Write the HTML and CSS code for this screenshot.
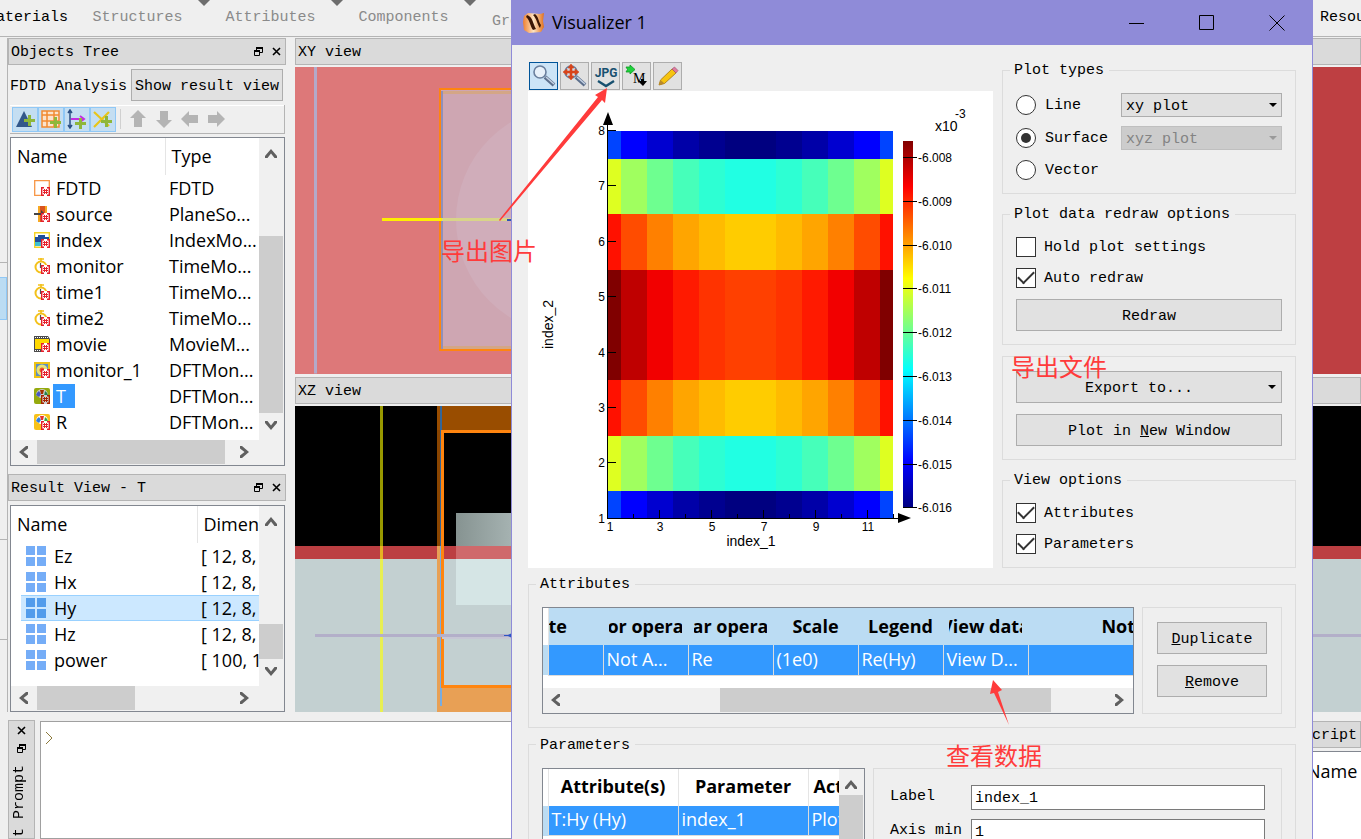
FILE: index.html
```html
<!DOCTYPE html>
<html lang="en">
<head>
    <meta charset="UTF-8">
    <meta name="viewport" content="width=device-width, initial-scale=1.0">
    <title>Visualizer 1</title>
    <link rel="stylesheet" href="styles.css">
</head>
<body>
    <!-- Shared icons -->
    <svg class="defs" aria-hidden="true">
        <symbol id="chev-up" viewBox="0 0 12 10"><path d="M0 8 6 1l6 7v2H9.500L6 5.500 2.500 10H0z" fill="#606060"/></symbol>
        <symbol id="chev-down" viewBox="0 0 12 10"><path d="M0 2 6 9l6-7V0H9.500L6 4.500 2.500 0H0z" fill="#606060"/></symbol>
        <symbol id="chev-left" viewBox="0 0 10 12"><path d="M8 0 1 6l7 6h2V9.500L5.500 6 10 2.500V0z" fill="#606060"/></symbol>
        <symbol id="chev-right" viewBox="0 0 10 12"><path d="M2 0l7 6-7 6H0V9.500L4.500 6 0 2.500V0z" fill="#606060"/></symbol>
        <symbol id="float" viewBox="0 0 9 9"><path d="M2.500 3V1.500h6v4H6M.5 3.500h5v5h-5z" fill="none" stroke="#000"/><path d="M2 0h7v2H2zM0 3h6v2H0z"/></symbol>
        <symbol id="close" viewBox="0 0 9 9"><path d="M1 1l7 7M8 1 1 8" fill="none" stroke="#000" stroke-width="1.600"/></symbol>
        <symbol id="caret" viewBox="0 0 8 4"><path d="M0 0h8L4 4z"/></symbol>
        <symbol id="plus" viewBox="0 0 11 11"><path d="M4 0h3v4h4v3H7v4H4V7H0V4h4z" fill="#8fb73a"/></symbol>
        <symbol id="arrow" viewBox="0 0 18 18"><path d="M9 0l8 8h-4v9H5V8H1z" fill="#b4b4b4"/></symbol>
        <symbol id="grid4" viewBox="0 0 20 20"><path d="M0 0h9v9H0zM11 0h9v9h-9zM0 11h9v9H0zM11 11h9v9h-9z"/></symbol>
        <symbol id="badge" viewBox="0 0 9 9"><path d="M0 0h9v9H0z" fill="#fff"/><path d="M3 .7H.7v7.600H3M6 .7h2.300v7.600H6" fill="none" stroke="#e5202b" stroke-width="1.400"/><path d="M3.500 2v5M5.500 2v5M2 3.500h5M2 5.500h5" stroke="#e5202b"/></symbol>
        <symbol id="i-fdtd" viewBox="0 0 16 16"><path d="M.7.7h14.600v14.600H.7z" fill="#fff" stroke="#f79646" stroke-width="1.300"/><use href="#badge" x="7" y="7" width="9" height="9"/></symbol>
        <symbol id="i-source" viewBox="0 0 16 16"><path d="M4 0h9v16H4z" fill="#f7a823"/><path d="M6 0h5v16H6z" fill="#d9531e"/><path d="M0 7h7V4l4 4-4 4v-3H0z" fill="#444"/><use href="#badge" x="7" y="7" width="9" height="9"/></symbol>
        <symbol id="i-index" viewBox="0 0 16 16"><path d="M.7.7h14.600v14.600H.7z" fill="#fff" stroke="#f5d327" stroke-width="1.400"/><path d="M1 5h3V3h7v2h4v5H1z" fill="#1f4e9c"/><path d="M1 10h14v4H1z" fill="#3ebfd0"/><use href="#badge" x="7" y="7" width="9" height="9"/></symbol>
        <symbol id="i-time" viewBox="0 0 16 16"><circle cx="7" cy="9" r="5.500" fill="#fff" stroke="#f3c11b" stroke-width="2"/><path d="M4 1h6M7 0v3" stroke="#f3c11b" stroke-width="1.600"/><path d="M6.500 5v5" stroke="#555" stroke-width="1.200"/><use href="#badge" x="7" y="7" width="9" height="9"/></symbol>
        <symbol id="i-movie" viewBox="0 0 16 16"><path d="M0 0h14l2 3v13H0z" fill="#4b4b4b"/><path d="M1 1.500h14M1 14.500h14" stroke="#fff" stroke-dasharray="1 1"/><path d="M1 3h14v10H1z" fill="#ffd800"/><use href="#badge" x="7" y="7" width="9" height="9"/></symbol>
        <symbol id="i-dft" viewBox="0 0 16 16"><path d="M1 1h14v14H1z" fill="#5c8fc0" stroke="#edc313" stroke-width="2"/><circle cx="8" cy="8" r="5.500" fill="#e3e27a"/><circle cx="8" cy="8" r="2.500" fill="#ee5a24"/><use href="#badge" x="7" y="7" width="9" height="9"/></symbol>
        <symbol id="i-power" viewBox="0 0 16 16"><rect width="16" height="16" rx="2" fill="#f7c21a"/><path d="M2 7a6 6 0 0 1 12 0l-4 3H6z" fill="#fff"/><path d="M2 7a6 6 0 0 1 3-4l2 3-2 3z" fill="#2f7de1"/><path d="M6 2h4l-1 4H7z" fill="#e5302b"/><path d="M11 3a6 6 0 0 1 3 4l-4 1z" fill="#3ba344"/><use href="#badge" x="7" y="7" width="9" height="9"/></symbol>
    </svg>

    <div class="app">
        <nav class="ribbon">
            <span class="tab tab-first">Materials</span>
            <span class="tab muted">Structures</span>
            <span class="tab muted">Attributes</span>
            <span class="tab muted">Components</span>
            <span class="tab tab-low muted">Groups</span>
            <span class="tab tab-last">Resources</span>
        </nav>

        <div class="workspace">
            <div class="strip">
                <span class="strip-btn"></span>
                <span class="strip-line"></span>
                <span class="strip-line"></span>
            </div>

            <aside class="docks">
                <div class="dock-title">
                    <span>Objects Tree</span>
                    <svg width="9" height="9"><use href="#float"/></svg>
                    <svg width="9" height="9"><use href="#close"/></svg>
                </div>
                <div class="mode-row">
                    <span>FDTD Analysis</span>
                    <button class="btn" type="button">Show result view</button>
                </div>
                <div class="tree-tools">
                    <button class="tool on" type="button" aria-label="Add structure"><svg width="20" height="20" viewBox="0 0 20 20"><path d="M9 2l8 16H1z" fill="#33588a"/><use href="#plus" x="9" y="6" width="11" height="11"/></svg></button>
                    <button class="tool on" type="button" aria-label="Add mesh"><svg width="20" height="20" viewBox="0 0 20 20"><path d="M1 2h17v16H1zM1 6h17M1 12h17M6 2v16M13 2v16" fill="#fbe3cc" stroke="#f28a30" stroke-width="1.500"/><use href="#plus" x="9" y="8" width="11" height="11"/></svg></button>
                    <button class="tool on" type="button" aria-label="Add source"><svg width="20" height="20" viewBox="0 0 20 20"><path d="M3 2v16M1 4l2-3 2 3M1 16l2 3 2-3" fill="none" stroke="#2b4f83" stroke-width="1.500"/><path d="M4 10h12M13 7l4 3-4 3" fill="none" stroke="#c22fe0" stroke-width="2"/><use href="#plus" x="8" y="9" width="11" height="11"/></svg></button>
                    <button class="tool on" type="button" aria-label="Add monitor"><svg width="20" height="20" viewBox="0 0 20 20"><path d="M1 3l15 14M16 3 1 18" stroke="#e8c518" stroke-width="2.200"/><use href="#plus" x="8" y="7" width="11" height="11"/></svg></button>
                    <span class="tool-sep"></span>
                    <button class="tool" type="button" aria-label="Up"><svg width="18" height="18"><use href="#arrow"/></svg></button>
                    <button class="tool" type="button" aria-label="Down"><svg class="r180" width="18" height="18"><use href="#arrow"/></svg></button>
                    <button class="tool" type="button" aria-label="Left"><svg class="r270" width="18" height="18"><use href="#arrow"/></svg></button>
                    <button class="tool" type="button" aria-label="Right"><svg class="r90" width="18" height="18"><use href="#arrow"/></svg></button>
                </div>

                <div class="list tree">
                    <div class="list-view">
                        <table>
                            <colgroup><col class="col-name"><col></colgroup>
                            <thead><tr><th>Name</th><th>Type</th></tr></thead>
                            <tbody>
                                <tr><td><svg><use href="#i-fdtd"/></svg><span>FDTD</span></td><td>FDTD</td></tr>
                                <tr><td><svg><use href="#i-source"/></svg><span>source</span></td><td>PlaneSo...</td></tr>
                                <tr><td><svg><use href="#i-index"/></svg><span>index</span></td><td>IndexMo...</td></tr>
                                <tr><td><svg><use href="#i-time"/></svg><span>monitor</span></td><td>TimeMo...</td></tr>
                                <tr><td><svg><use href="#i-time"/></svg><span>time1</span></td><td>TimeMo...</td></tr>
                                <tr><td><svg><use href="#i-time"/></svg><span>time2</span></td><td>TimeMo...</td></tr>
                                <tr><td><svg><use href="#i-movie"/></svg><span>movie</span></td><td>MovieM...</td></tr>
                                <tr><td><svg><use href="#i-dft"/></svg><span>monitor_1</span></td><td>DFTMon...</td></tr>
                                <tr class="picked"><td><svg><use href="#i-power"/></svg><span>T</span></td><td>DFTMon...</td></tr>
                                <tr><td><svg><use href="#i-power"/></svg><span>R</span></td><td>DFTMon...</td></tr>
                            </tbody>
                        </table>
                    </div>
                    <div class="vscroll">
                        <svg width="12" height="10"><use href="#chev-up"/></svg>
                        <span class="thumb"></span>
                        <svg width="12" height="10"><use href="#chev-down"/></svg>
                    </div>
                    <div class="hscroll">
                        <svg width="10" height="12"><use href="#chev-left"/></svg>
                        <span class="thumb"></span>
                        <svg width="10" height="12"><use href="#chev-right"/></svg>
                    </div>
                </div>

                <div class="dock-title dock-title-next">
                    <span>Result View - T</span>
                    <svg width="9" height="9"><use href="#float"/></svg>
                    <svg width="9" height="9"><use href="#close"/></svg>
                </div>
                <div class="list results">
                    <div class="list-view">
                        <table>
                            <colgroup><col class="col-name"><col></colgroup>
                            <thead><tr><th>Name</th><th>Dimensions</th></tr></thead>
                            <tbody>
                                <tr><td><svg><use href="#grid4"/></svg><span>Ez</span></td><td>[ 12, 8, 1, 1 ]</td></tr>
                                <tr><td><svg><use href="#grid4"/></svg><span>Hx</span></td><td>[ 12, 8, 1, 1 ]</td></tr>
                                <tr class="picked"><td><svg><use href="#grid4"/></svg><span>Hy</span></td><td>[ 12, 8, 1, 1 ]</td></tr>
                                <tr><td><svg><use href="#grid4"/></svg><span>Hz</span></td><td>[ 12, 8, 1, 1 ]</td></tr>
                                <tr><td><svg><use href="#grid4"/></svg><span>power</span></td><td>[ 100, 1 ]</td></tr>
                            </tbody>
                        </table>
                    </div>
                    <div class="vscroll">
                        <svg width="12" height="10"><use href="#chev-up"/></svg>
                        <span class="thumb"></span>
                        <svg width="12" height="10"><use href="#chev-down"/></svg>
                    </div>
                    <div class="hscroll">
                        <svg width="10" height="12"><use href="#chev-left"/></svg>
                        <span class="thumb"></span>
                        <svg width="10" height="12"><use href="#chev-right"/></svg>
                    </div>
                </div>
            </aside>

            <main class="views">
                <section class="view">
                    <div class="dock-title"><span>XY view</span></div>
                    <svg class="scene scene-xy">
                        <rect x="19" width="3" height="100%" fill="#b3a9c9"/>
                        <rect x="145" y="23" width="500" height="260" fill="#cea6b2"/>
                        <rect x="147" y="24" width="500" height="3" fill="#d4a686"/>
                        <rect x="147" y="279" width="500" height="3" fill="#d4a686"/>
                        <circle cx="276" cy="153" r="115" fill="#d0adba"/>
                        <rect x="145" y="22" width="500" height="261" fill="none" stroke="#ff850f" stroke-width="2"/>
                        <rect x="146" y="24" width="2" height="258" fill="#9090b8"/>
                        <rect x="87" y="151" width="60" height="3" fill="#ffef00"/>
                        <rect x="147" y="151" width="400" height="3" fill="#d8d488"/>
                        <rect x="212" y="152" width="10" height="2" fill="#2d55b5"/>
                    </svg>
                </section>
                <section class="view">
                    <div class="dock-title"></div>
                    <svg class="scene scene-red"></svg>
                </section>
                <section class="view">
                    <div class="dock-title"><span>XZ view</span></div>
                    <svg class="scene scene-xz">
                        <defs>
                            <linearGradient id="slab"><stop offset="0" stop-color="#869391"/><stop offset="1" stop-color="#a8b5b4"/></linearGradient>
                        </defs>
                        <rect y="140" width="100%" height="13" fill="#bc3f42"/>
                        <rect y="153" width="100%" height="100%" fill="#c3d0d1"/>
                        <rect x="161" y="107" width="60" height="33" fill="url(#slab)"/>
                        <rect x="161" y="140" width="60" height="13" fill="#cf696b"/>
                        <rect x="161" y="153" width="60" height="46" fill="#d5e5e5"/>
                        <rect x="85" width="3" height="140" fill="#999900"/>
                        <rect x="85" y="140" width="3" height="13" fill="#e6b222"/>
                        <rect x="85" y="153" width="3" height="100%" fill="#e8ef52"/>
                        <rect x="142" width="400" height="24" fill="#994d00"/>
                        <rect x="142" y="24" width="3" height="116" fill="#8a4500"/>
                        <rect x="142" y="140" width="3" height="200" fill="#e8a055"/>
                        <rect x="142" y="282" width="400" height="40" fill="#e8a055"/>
                        <rect x="145" width="2" height="140" fill="#336699"/>
                        <rect x="145" y="140" width="2" height="160" fill="#78ace0"/>
                        <path d="M600 25.500H147.500V280.500H600" fill="none" stroke="#ff850f" stroke-width="3"/>
                        <rect x="20" y="228" width="400" height="3" fill="#b3afc9"/>
                        <rect x="147" y="231" width="400" height="2" fill="#c6c6d4"/>
                        <path d="M209 229h4l4-2v5l-4-2h-4z" fill="#2d55c5"/>
                    </svg>
                </section>
                <section class="view">
                    <div class="dock-title"></div>
                    <svg class="scene scene-xz">
                        <rect y="140" width="100%" height="13" fill="#bc3f42"/>
                        <rect y="153" width="100%" height="100%" fill="#c3d0d1"/>
                        <rect y="228" width="100%" height="3" fill="#b3afc9"/>
                    </svg>
                </section>
            </main>
        </div>

        <div class="bottom">
            <div class="side-title">
                <svg width="9" height="9"><use href="#close"/></svg>
                <svg width="9" height="9"><use href="#float"/></svg>
                <span>Script Prompt</span>
            </div>
            <div class="console">
                <svg width="8" height="14" viewBox="0 0 8 14"><path d="M1 1l6 6-6 6" fill="none" stroke="#8c7a3c"/></svg>
            </div>
            <div class="script-dock">
                <div class="dock-title"><span>Script</span></div>
                <div class="script-list">Name</div>
            </div>
        </div>
    </div>

    <div class="dialog" role="dialog" aria-label="Visualizer 1">
        <header class="titlebar">
            <svg width="24" height="24" viewBox="0 0 24 24">
                <defs><linearGradient id="logo"><stop offset="0" stop-color="#ef7f2e"/><stop offset=".5" stop-color="#ffe4c0"/><stop offset="1" stop-color="#e0701c"/></linearGradient></defs>
                <path d="M2 5l4-3 12 1 4-1-1 8 1 6-3 5-12 1-5-3-1-8z" fill="url(#logo)"/>
                <path d="M4 6c4 3 4 9 7 13l3-1C11 13 11 6 5 4zM11 4c4 4 4 9 7 13l1-3c-3-4-2-8-6-11z" fill="#3b1705"/>
            </svg>
            <h1>Visualizer 1</h1>
            <button type="button" aria-label="Minimize"><svg width="16" height="16" viewBox="0 0 16 16"><path d="M0 8.500h15" stroke="#000"/></svg></button>
            <button type="button" aria-label="Maximize"><svg width="16" height="16" viewBox="0 0 16 16"><path d="M.5.5h14v14H.5z" fill="none" stroke="#000"/></svg></button>
            <button type="button" aria-label="Close"><svg width="16" height="16" viewBox="0 0 16 16"><path d="M.5.5l15 15M15.500.5l-15 15" stroke="#000"/></svg></button>
        </header>

        <div class="dialog-body">
            <div class="top-row">
                <div class="plot-side">
                    <div class="plot-tools">
                        <button class="plot-btn active" type="button" aria-label="Zoom"><svg width="24" height="24" viewBox="0 0 24 24"><path d="M13 13l9 8" stroke="#5c6f8c" stroke-width="4"/><path d="M14 13l8 7" stroke="#c5d2e4" stroke-width="1.500"/><circle cx="8" cy="8" r="6" fill="#e8f1fa" stroke="#6a7f9d" stroke-width="1.600"/></svg></button>
                        <button class="plot-btn" type="button" aria-label="Pan"><svg width="24" height="24" viewBox="0 0 24 24"><path d="M13 13l9 8" stroke="#5c6f8c" stroke-width="4"/><path d="M14 13l8 7" stroke="#c5d2e4" stroke-width="1.500"/><circle cx="8" cy="8" r="6" fill="#d5dde8" stroke="#6a7f9d" stroke-width="1.600"/><path d="M8 0l3 4H9v3h3V5l4 3-4 3V9H9v3h2l-3 4-3-4h2V9H4v2L0 8l4-3v2h3V4H5z" fill="#d9441a" stroke="#d9441a" stroke-width=".6"/></svg></button>
                        <button class="plot-btn" type="button" aria-label="Export JPG"><svg width="24" height="24" viewBox="0 0 24 24"><text x="12" y="13" class="jpg">JPG</text><path d="M4 17l8 5 8-5" fill="none" stroke="#17506f" stroke-width="2.400"/></svg></button>
                        <button class="plot-btn" type="button" aria-label="Export to Matlab"><svg width="24" height="24" viewBox="0 0 24 24"><path d="M1 3h4V1l5 4.500L5 10V8H1l1.500-2.500z" fill="#1fd23c" stroke="#0c9a22" stroke-width=".8"/><text x="8" y="19" class="mat">M</text><path d="M16 15h3v2h3l-4 5-5-5h3z"/></svg></button>
                        <button class="plot-btn" type="button" aria-label="Edit"><svg width="24" height="24" viewBox="0 0 24 24"><path d="M3 21l1.500-5L16 5l4 4L8.500 19.500z" fill="#f6c410" stroke="#a5740e" stroke-width=".8"/><path d="M16 5l2.500-2L22 6.500 20 9z" fill="#dd7ba0" stroke="#9c4a6a" stroke-width=".6"/><path d="M3 21l1.500-5 4 3.500z" fill="#b98a2c"/></svg></button>
                    </div>
                    <div class="plot">
                        <svg class="chart" viewBox="0 0 465 477" role="img" aria-label="index_2 against index_1">
                            <defs>
                                <linearGradient id="jet" x1="0" y1="0" x2="0" y2="1">
                                    <stop offset="0" stop-color="#800000"/>
                                    <stop offset=".125" stop-color="#ff0000"/>
                                    <stop offset=".375" stop-color="#ffff00"/>
                                    <stop offset=".625" stop-color="#00ffff"/>
                                    <stop offset=".875" stop-color="#0000ff"/>
                                    <stop offset="1" stop-color="#000080"/>
                                </linearGradient>
                            </defs>
                            <g id="cells" shape-rendering="crispEdges"></g>
                            <rect x="375" y="50" width="10" height="367" fill="url(#jet)"/>
                            <g id="axes" shape-rendering="crispEdges"></g>
                            <path d="M80 21l5 13H75zM383 427l-13 5v-10z"/>
                            <g id="labels"></g>
                            <text class="axis" x="223" y="455" text-anchor="middle">index_1</text>
                            <text class="axis" transform="translate(25 258) rotate(-90)">index_2</text>
                            <text class="axis" x="407" y="40">x10</text>
                            <text x="427" y="27">-3</text>
                        </svg>
                    </div>
                </div>

                <div class="options">
                    <fieldset class="group">
                        <legend>Plot types</legend>
                        <div class="types">
                            <label><input type="radio" name="type">Line</label>
                            <div class="select"><select aria-label="Line plot"><option>xy plot</option></select><svg width="8" height="4"><use href="#caret"/></svg></div>
                            <label><input type="radio" name="type" checked>Surface</label>
                            <div class="select off"><select aria-label="Surface plot" disabled><option>xyz plot</option></select><svg width="8" height="4"><use href="#caret"/></svg></div>
                            <label><input type="radio" name="type">Vector</label>
                        </div>
                    </fieldset>
                    <fieldset class="group">
                        <legend>Plot data redraw options</legend>
                        <label><input type="checkbox">Hold plot settings</label>
                        <label><input type="checkbox" checked>Auto redraw</label>
                        <button class="btn" type="button">Redraw</button>
                    </fieldset>
                    <div class="group">
                        <button class="btn menu-btn" type="button"><span>Export to...</span><svg width="8" height="4"><use href="#caret"/></svg></button>
                        <button class="btn" type="button">Plot in <u>N</u>ew Window</button>
                    </div>
                    <fieldset class="group">
                        <legend>View options</legend>
                        <label><input type="checkbox" checked>Attributes</label>
                        <label><input type="checkbox" checked>Parameters</label>
                    </fieldset>
                </div>
            </div>

            <fieldset class="group wide">
                <legend>Attributes</legend>
                <div class="grid-box attrs">
                    <div class="grid-view">
                        <table>
                            <colgroup><col class="c-head"><col class="c-first"><col class="c-85"><col class="c-85"><col class="c-85"><col class="c-85"><col class="c-85"><col class="c-notes"></colgroup>
                            <thead>
                                <tr><th></th><th class="cut">te</th><th><span>or opera</span></th><th><span>ar opera</span></th><th><span>Scale</span></th><th><span>Legend</span></th><th><span>View data</span></th><th><span>Notes</span></th></tr>
                            </thead>
                            <tbody>
                                <tr><th></th><td></td><td>Not A...</td><td>Re</td><td>(1e0)</td><td>Re(Hy)</td><td>View D...</td><td></td></tr>
                            </tbody>
                        </table>
                    </div>
                    <div class="hscroll">
                        <svg width="10" height="12"><use href="#chev-left"/></svg>
                        <span class="thumb"></span>
                        <svg width="10" height="12"><use href="#chev-right"/></svg>
                    </div>
                </div>
                <div class="frame actions">
                    <button class="btn" type="button"><u>D</u>uplicate</button>
                    <button class="btn" type="button"><u>R</u>emove</button>
                </div>
            </fieldset>

            <fieldset class="group wide">
                <legend>Parameters</legend>
                <div class="grid-box params">
                    <div class="grid-view">
                        <table>
                            <colgroup><col class="c-head"><col class="c-130"><col class="c-130"><col class="c-85"></colgroup>
                            <thead>
                                <tr><th></th><th>Attribute(s)</th><th>Parameter</th><th class="cut">Action</th></tr>
                            </thead>
                            <tbody>
                                <tr><th></th><td>T:Hy (Hy)</td><td>index_1</td><td>Plot</td></tr>
                            </tbody>
                        </table>
                    </div>
                    <div class="vscroll">
                        <svg width="12" height="10"><use href="#chev-up"/></svg>
                        <span class="thumb"></span>
                    </div>
                </div>
                <div class="frame fields">
                    <label for="axis-label">Label</label>
                    <input id="axis-label" type="text" value="index_1">
                    <label for="axis-min">Axis min</label>
                    <input id="axis-min" type="text" value="1">
                </div>
            </fieldset>
        </div>
    </div>

    <!-- Notes drawn over the windows -->
    <svg class="arrows" aria-hidden="true">
        <path d="M499 220L598 97L595 95L607 88L605 103L602 100L500 221z" fill="#ff3b3b"/>
        <path d="M1009 725L994 693L990 694L993 680L1002 690L998 692z" fill="#ff3b3b"/>
    </svg>
    <span class="note note-image">导出图片</span>
    <span class="note note-file">导出文件</span>
    <span class="note note-data">查看数据</span>

    <script src="script.js"></script>
</body>
</html>
```

FILE: styles.css
```css
:root {
    --face: #efefef;
    --title: #dadada;
    --line: #b4b4b4;
    --group-line: #dcdcdc;
    --box-line: #828790;
    --blue: #3399ff;
    --pale-blue: #bbdcf3;
    --purple: #8f8bd8;
    --mono: "Liberation Mono", "Noto Sans CJK SC", monospace;
    --ui: "Open Sans", "Noto Sans CJK SC", sans-serif;
}

* {
    box-sizing: border-box;
}

body {
    margin: 0;
    position: relative;
    height: 100vh;
    overflow: hidden;
    background: var(--face);
    color: #000;
    font: 15px/18px var(--mono);
    white-space: nowrap;
}

svg {
    display: block;
    flex: none;
}

button, input, select {
    font: inherit;
    color: inherit;
    margin: 0;
}

table {
    border-collapse: collapse;
    table-layout: fixed;
}

.defs {
    position: absolute;
    width: 0;
    height: 0;
}

.app {
    display: flex;
    flex-direction: column;
    height: 100%;
}

/* Ribbon */
.ribbon {
    display: flex;
    height: 37px;
    border-bottom: 1px solid var(--line);
    overflow: hidden;
}

.tab {
    position: relative;
    flex: none;
    width: 133px;
    padding-top: 9px;
    text-align: center;
}

.tab.muted {
    color: #8a8a8a;
}

.tab.muted:not(.tab-low)::after {
    content: "";
    position: absolute;
    right: -6px;
    top: 0;
    border: 6px solid transparent;
    border-top-color: #6d6d6d;
    border-bottom: 0;
}

.tab-first {
    width: 71px;
    display: flex;
    justify-content: flex-end;
    padding-right: 3px;
}

.tab-low {
    padding-top: 13px;
    padding-left: 22px;
    text-align: left;
}

.tab-last {
    width: 41px;
    margin-left: auto;
    text-align: left;
}

/* Docks */
.workspace {
    display: flex;
    padding-top: 1px;
}

.strip {
    width: 8px;
    border-right: 1px solid var(--line);
    padding-top: 224px;
}

.strip-btn {
    display: block;
    height: 277px;
    border-top: 1px solid var(--line);
}

.strip-btn::after {
    content: "";
    display: block;
    width: 6px;
    height: 41px;
    margin-top: 14px;
    background: var(--pale-blue);
    border: 1px solid #90c8f6;
    border-left: 0;
}

.strip-line {
    display: block;
    height: 100px;
    border-top: 1px solid var(--line);
}

.strip-line:last-child {
    height: 1px;
}

.docks {
    flex: none;
    width: 278px;
    margin-right: 9px;
}

.dock-title {
    display: flex;
    align-items: center;
    gap: 9px;
    height: 27px;
    padding: 0 4px 0 2px;
    background: var(--title);
    border: 1px solid var(--line);
}

.dock-title span {
    flex: 1;
    padding-top: 3px;
}

.dock-title-next {
    margin-top: 8px;
}

.mode-row {
    display: flex;
    align-items: center;
    gap: 4px;
    padding: 4px 2px;
}

.mode-row span {
    padding-top: 3px;
}

.btn {
    display: block;
    height: 32px;
    padding: 3px 3px 0;
    background: #e1e1e1;
    border: 1px solid #adadad;
}

.tree-tools {
    display: flex;
    align-items: center;
    height: 29px;
    margin: 0 1px 3px 2px;
    padding-left: 2px;
    border: 1px solid var(--line);
    border-width: 0 1px 1px 0;
    box-shadow: inset 0 1px #fff;
}

.tool {
    display: grid;
    place-items: center;
    width: 26px;
    height: 25px;
    padding: 0;
    background: none;
    border: 0;
}

.tool.on {
    background: #c4def2;
    border: 1px solid #90c8f6;
}

.tool-sep {
    height: 20px;
    margin: 0 4px;
    border-left: 1px solid #d0d0d0;
}

.r90 { transform: rotate(90deg); }
.r180 { transform: rotate(180deg); }
.r270 { transform: rotate(270deg); }

.list {
    display: grid;
    grid-template-columns: 1fr 25px;
    margin: 0 1px 0 2px;
    background: #fff;
    border: 1px solid var(--box-line);
    font-family: var(--ui);
    font-size: 18px;
}

.list-view {
    overflow: hidden;
    padding-bottom: 5px;
}

.list table {
    width: 100%;
}

.list th {
    height: 37px;
    padding: 0 6px 2px;
    text-align: left;
    font-weight: 400;
    line-height: 24px;
    overflow: hidden;
}

.list th + th {
    border-left: 1px solid #e5e5e5;
}

.list td {
    height: 26px;
    padding: 0 0 0 4px;
    overflow: hidden;
}

.list td:first-child {
    display: flex;
    align-items: center;
    padding-left: 23px;
}

.list td span {
    padding: 3px 9px 3px 3px;
    margin-left: 3px;
}

.tree td svg {
    width: 16px;
    height: 16px;
}

.tree .col-name {
    width: 154px;
}

.tree .picked span {
    background: var(--blue);
    color: #fff;
}

.tree .picked td svg {
    filter: hue-rotate(20deg) brightness(.8);
}

.results {
    margin-top: 4px;
}

.results .list-view {
    padding-bottom: 13px;
}

.results .col-name {
    width: 186px;
}

.results td:first-child {
    padding-left: 15px;
}

.results td:first-child svg {
    width: 20px;
    height: 20px;
    fill: #75adf7;
}

.results td:first-child span {
    margin-left: 5px;
}

.results .picked {
    background: linear-gradient(to right, #fff 10px, #cce8ff 10px);
}

.results .picked td {
    box-shadow: inset 0 1px #99d1ff, inset 0 -1px #99d1ff;
}

.results .picked td:first-child {
    margin-left: 10px;
    padding-left: 5px;
}

.results .picked td:first-child svg {
    fill: #529ceb;
}

/* Scroll bars */
.vscroll, .hscroll {
    display: flex;
    align-items: center;
    background: #f0f0f0;
}

.thumb {
    background: #cdcdcd;
}

.vscroll {
    flex-direction: column;
    justify-content: space-between;
    padding: 10px 1px 9px 0;
}

.vscroll .thumb {
    width: 24px;
    margin-top: auto;
    margin-bottom: 8px;
    height: 177px;
}

.results .vscroll .thumb {
    height: 35px;
}

.hscroll {
    grid-column: 1 / -1;
    height: 25px;
    padding: 0 34px 1px 7px;
}

.hscroll .thumb {
    width: 188px;
    height: 24px;
    margin: 0 auto 0 9px;
}

.results .hscroll .thumb {
    width: 98px;
}

/* Model views */
.views {
    flex: 1;
    display: grid;
    grid-template-columns: 1fr 1fr;
    grid-template-rows: 1fr 1fr;
    gap: 3px 8px;
    min-width: 0;
}

.view {
    display: flex;
    flex-direction: column;
    gap: 2px;
    min-width: 0;
    overflow: hidden;
}

.scene {
    flex: 1;
    width: 100%;
    min-height: 0;
}

.scene-xy { background: #dd7879; }
.scene-red { background: #be3f42; }
.scene-xz { background: #000; }

/* Bottom docks */
.bottom {
    flex: 1;
    display: flex;
    gap: 5px;
    margin-top: 8px;
    padding-left: 8px;
    min-height: 0;
}

.side-title {
    display: flex;
    flex-direction: column;
    align-items: center;
    gap: 9px;
    width: 27px;
    padding-top: 5px;
    background: var(--title);
    border: 1px solid var(--line);
    overflow: hidden;
}

.side-title span {
    writing-mode: vertical-rl;
    transform: rotate(180deg);
    padding: 0 0 3px 3px;
}

.console {
    flex: 1;
    margin-top: 1px;
    padding: 9px 4px;
    background: #fff;
    border: 1px solid #a0a0a0;
    border-right: 0;
}

.script-dock {
    width: 61px;
    display: flex;
    flex-direction: column;
    gap: 3px;
    padding-top: 1px;
}

.script-list {
    flex: 1;
    padding: 10px 7px;
    background: #fff;
    border-top: 1px solid var(--box-line);
    font-family: var(--ui);
    font-size: 18px;
}

/* Visualizer window */
.dialog {
    position: absolute;
    top: 0;
    left: 511px;
    right: 48px;
    height: 100%;
    overflow: hidden;
    background: var(--face);
    border: 1px solid var(--purple);
    border-width: 0 1px;
}

.titlebar {
    display: flex;
    align-items: center;
    height: 45px;
    padding-left: 10px;
    background: var(--purple);
}

.titlebar h1 {
    flex: 1;
    margin: 0;
    padding: 0 0 2px 6px;
    font: 400 18px/24px var(--ui);
}

.titlebar button {
    display: grid;
    place-items: center;
    width: 70px;
    height: 45px;
    padding: 0;
    background: none;
    border: 0;
}

.dialog-body {
    padding: 16px 16px 0;
}

.top-row {
    display: flex;
    gap: 9px;
    margin-bottom: 7px;
}

.plot-side {
    flex: 1;
    display: flex;
    flex-direction: column;
    padding-top: 1px;
}

.plot-tools {
    display: flex;
    gap: 2px;
    padding: 0 1px 1px;
}

.plot-btn {
    display: grid;
    place-items: center;
    width: 29px;
    height: 28px;
    padding: 0;
    background: #e1e1e1;
    border: 1px solid #adadad;
}

.plot-btn.active {
    background: #cce4f7;
    border-color: #005499;
}

.jpg {
    font: 700 12px Roboto, sans-serif;
    fill: #17506f;
    text-anchor: middle;
}

.mat {
    font: 14px "Liberation Serif", serif;
}

.plot {
    flex: 1;
    background: #fff;
}

.chart {
    width: 100%;
    font: 12px "Liberation Sans", sans-serif;
}

.axis {
    font-size: 14px;
}

.options {
    width: 294px;
    display: flex;
    flex-direction: column;
    justify-content: space-between;
}

.group {
    display: flex;
    flex-direction: column;
    gap: 11px;
    min-width: 0;
    margin: 0;
    padding: 14px 13px 13px;
    border: 1px solid var(--group-line);
}

.group legend {
    margin-left: -6px;
    padding: 2px 5px 0 4px;
    line-height: 16px;
}

.group label {
    display: flex;
    align-items: flex-end;
    align-self: center;
    gap: 8px;
    width: 100%;
}

.types {
    display: grid;
    grid-template-columns: 105px 1fr;
    grid-template-rows: 24px 24px 21px;
    gap: 9px 0;
}

.types label {
    gap: 9px;
}

input[type="radio"], input[type="checkbox"] {
    appearance: none;
    display: grid;
    place-items: center;
    width: 20px;
    height: 20px;
    background: #fff;
    border: 1px solid #333;
}

input[type="radio"] {
    border-radius: 50%;
}

input[type="radio"]:checked::after {
    content: "";
    width: 10px;
    height: 10px;
    border-radius: 50%;
    background: #333;
}

input[type="checkbox"]:checked::after {
    content: "";
    width: 14px;
    height: 7px;
    margin-bottom: 5px;
    border: 2px solid #333;
    border-width: 0 0 2px 2px;
    transform: rotate(-45deg);
}

.select {
    display: grid;
    align-items: center;
}

.select > * {
    grid-area: 1 / 1;
}

.select select {
    appearance: none;
    width: 100%;
    height: 24px;
    padding: 3px 4px 0;
    background: #e1e1e1;
    border: 1px solid #adadad;
    border-radius: 0;
}

.select svg {
    justify-self: end;
    margin-right: 5px;
    pointer-events: none;
}

.select.off select {
    background: #cccccc;
    border-color: #bfbfbf;
    color: #838383;
    opacity: 1;
}

.select.off svg {
    fill: #9a9a9a;
}

.menu-btn {
    display: flex;
    align-items: center;
    padding: 0 5px;
}

.menu-btn span {
    flex: 1;
    padding: 3px 12px 0 0;
}

/* Tables of the visualizer */
.wide {
    flex-direction: row;
    gap: 8px;
    margin-bottom: 8px;
}

.grid-box {
    background: #fff;
    border: 1px solid var(--box-line);
    font-family: var(--ui);
    font-size: 18px;
    line-height: 24px;
    min-width: 0;
}

.grid-view {
    overflow: hidden;
}

.grid-box thead th {
    height: 37px;
    padding: 0 6px 2px;
    border-right: 1px solid #e5e5e5;
    overflow: hidden;
}

.grid-box thead th span {
    display: flex;
    justify-content: center;
    overflow: hidden;
}

.grid-box thead th.cut {
    text-align: left;
    padding: 0 5px 2px;
}

.grid-box tbody td {
    height: 30px;
    padding: 0 3px 2px;
    background: var(--blue);
    border: 1px solid var(--group-line);
    border-top: 0;
    color: #fff;
}

.grid-box tbody th {
    padding: 0;
    background: var(--pale-blue);
}

.c-head { width: 5px; }
.c-first { width: 55px; }
.c-85 { width: 85px; }
.c-130 { width: 130px; }
.c-notes { width: 200px; }

.attrs {
    flex: 1;
}

.attrs table {
    width: 685px;
}

.attrs .grid-view {
    padding-bottom: 12px;
}

.attrs thead th + th {
    background: var(--pale-blue);
    border-right: 0;
}

.attrs thead th.cut {
    padding: 0 0 2px;
}

.attrs .hscroll {
    padding-right: 8px;
}

.attrs .hscroll .thumb {
    width: 331px;
    margin: 0 auto 0 160px;
}

.frame {
    border: 1px solid var(--group-line);
}

.actions {
    width: 140px;
    padding: 14px;
    display: flex;
    flex-direction: column;
    gap: 11px;
}

.params {
    flex: none;
    width: 323px;
    display: flex;
}

.params table {
    width: 350px;
}

.params .grid-view {
    flex: 1;
}

.params .vscroll {
    justify-content: flex-start;
    width: 25px;
    padding-bottom: 0;
}

.params .vscroll .thumb {
    flex: 1;
    margin: 6px 0 0;
}

.fields {
    flex: 1;
    display: grid;
    grid-template-columns: 72px 1fr;
    grid-auto-rows: 25px;
    gap: 9px;
    padding: 16px;
}

.fields input {
    width: 100%;
    min-width: 0;
    padding: 3px 3px 0;
    background: #fff;
    border: 1px solid #7a7a7a;
    border-radius: 0;
}

/* Notes */
.arrows {
    position: absolute;
    inset: 0;
    width: 100%;
    height: 100%;
    pointer-events: none;
}

.note {
    position: absolute;
    color: #ff3b3b;
    font: 24px/30px "Noto Sans CJK SC", sans-serif;
}

.note-image { left: 441px; top: 235px; }
.note-file { left: 1011px; top: 351px; }
.note-data { left: 946px; top: 740px; }
```

FILE: script.js
```js
// Values by row, left half only: the map is symmetric
const outer = ['#0044ff', '#0000ff', '#0000d0', '#0000a8', '#000090', '#000080'];
const second = ['#deff21', '#a0ff5f', '#6eff90', '#46ffba', '#2dffd3', '#21ffe3'];
const third = ['#ff1100', '#ff4c00', '#ff8000', '#ffa500', '#ffbb00', '#ffcc00'];
const middle = ['#800000', '#bf0000', '#f20000', '#ff1a00', '#ff3300', '#ff4000'];
const rows = [outer, second, third, middle, middle, third, second, outer];

const xs = [80, 93, 119, 145, 171, 197, 223, 248, 274, 300, 326, 352, 365];
const ys = [40, 68, 123, 179, 234, 289, 345, 400, 428];

const cells = document.getElementById('cells');
const axes = document.getElementById('axes');
const labels = document.getElementById('labels');

function add(parent, name, attrs, text) {
    const el = document.createElementNS('http://www.w3.org/2000/svg', name);
    for (const key in attrs) {
        el.setAttribute(key, attrs[key]);
    }
    if (text !== undefined) {
        el.textContent = text;
    }
    parent.appendChild(el);
}

function bar(x, y, width, height) {
    add(axes, 'rect', { x, y, width, height });
}

rows.forEach((row, r) => {
    for (let c = 0; c < 12; c++) {
        add(cells, 'rect', {
            x: xs[c],
            y: ys[r],
            width: xs[c + 1] - xs[c],
            height: ys[r + 1] - ys[r],
            fill: row[Math.min(c, 11 - c)]
        });
    }
});

// Axis lines
bar(79, 30, 1, 398);
bar(79, 427, 294, 1);

// Vertical axis
for (let i = 0; i < 8; i++) {
    const y = Math.round(39 + i * 55.4);
    bar(80, y, 8, 1);
    add(labels, 'text', { x: 77, y: y + 5, 'text-anchor': 'end' }, 8 - i);
}

// Horizontal axis
for (let i = 0; i < 12; i++) {
    const x = 79 + i * 26;
    const major = i % 2 === 0;
    bar(x, major ? 419 : 423, 1, major ? 8 : 4);
    if (major) {
        add(labels, 'text', { x: i === 0 ? x + 3 : x + 1, y: 440, 'text-anchor': 'middle' }, i + 1);
    }
}

// Colour bar
for (let i = 0; i < 9; i++) {
    const y = Math.round(66 + i * 43.8);
    bar(375, y, 14, 1);
    add(labels, 'text', { x: 390, y: y + 5 }, '-6.0' + String(8 + i).padStart(2, '0'));
}
```
